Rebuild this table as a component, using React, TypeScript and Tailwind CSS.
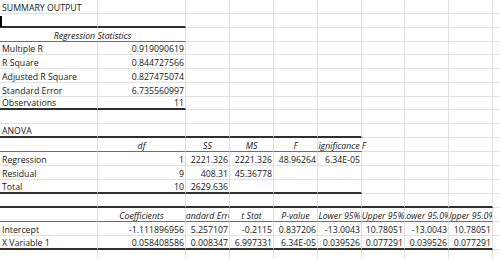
import React from 'react';

type Cell = {
  t?: string;
  a?: 'l' | 'r' | 'c';
  i?: boolean;
  b?: 'thick' | 'thin';
  w?: string;
  spill?: boolean;
  noRight?: boolean;
};

type Row = { h: string; cells: Cell[] };

const widths = [
  'w-[98px]',
  'w-[88px]',
  'w-[44px]',
  'w-[44px]',
  'w-[44px]',
  'w-[44px]',
  'w-[43px]',
  'w-[44px]',
  'w-[44px]',
  'w-[44px]',
];

const thickRow = (n: number): Cell[] => Array.from({ length: n }, () => ({ b: 'thick' as const }));

const rows: Row[] = [
  { h: 'h-[14px]', cells: [{ t: 'SUMMARY OUTPUT' }] },
  { h: 'h-[14px]', cells: thickRow(2) },
  { h: 'h-[14px]', cells: [{ t: 'Regression Statistics', a: 'c', i: true, b: 'thin', w: 'w-[186px]' }] },
  { h: 'h-[13px]', cells: [{ t: 'Multiple R' }, { t: '0.919090619', a: 'r' }] },
  { h: 'h-[14px]', cells: [{ t: 'R Square' }, { t: '0.844727566', a: 'r' }] },
  { h: 'h-[14px]', cells: [{ t: 'Adjusted R Square' }, { t: '0.827475074', a: 'r' }] },
  { h: 'h-[14px]', cells: [{ t: 'Standard Error' }, { t: '6.735560997', a: 'r' }] },
  { h: 'h-[13px]', cells: [{ t: 'Observations', b: 'thick' }, { t: '11', a: 'r', b: 'thick' }] },
  { h: 'h-[14px]', cells: [] },
  { h: 'h-[14px]', cells: [{ t: 'ANOVA', b: 'thick' }, ...thickRow(5)] },
  {
    h: 'h-[14px]',
    cells: [
      { b: 'thin' },
      { t: 'df', a: 'c', i: true, b: 'thin' },
      { t: 'SS', a: 'c', i: true, b: 'thin' },
      { t: 'MS', a: 'c', i: true, b: 'thin' },
      { t: 'F', a: 'c', i: true, b: 'thin' },
      { t: 'Significance F', a: 'c', i: true, b: 'thin', spill: true, noRight: true },
    ],
  },
  {
    h: 'h-[14px]',
    cells: [
      { t: 'Regression' },
      { t: '1', a: 'r' },
      { t: '2221.326', a: 'r' },
      { t: '2221.326', a: 'r' },
      { t: '48.96264', a: 'r' },
      { t: '6.34E-05', a: 'r' },
    ],
  },
  {
    h: 'h-[14px]',
    cells: [{ t: 'Residual' }, { t: '9', a: 'r' }, { t: '408.31', a: 'r' }, { t: '45.36778', a: 'r' }],
  },
  {
    h: 'h-[14px]',
    cells: [
      { t: 'Total', b: 'thick' },
      { t: '10', a: 'r', b: 'thick' },
      { t: '2629.636', a: 'r', b: 'thick' },
      ...thickRow(3),
    ],
  },
  { h: 'h-[14px]', cells: thickRow(9) },
  {
    h: 'h-[14px]',
    cells: [
      { b: 'thin' },
      { t: 'Coefficients', a: 'c', i: true, b: 'thin' },
      { t: 'Standard Error', a: 'c', i: true, b: 'thin' },
      { t: 't Stat', a: 'c', i: true, b: 'thin' },
      { t: 'P-value', a: 'c', i: true, b: 'thin' },
      { t: 'Lower 95%', a: 'c', i: true, b: 'thin' },
      { t: 'Upper 95%', a: 'c', i: true, b: 'thin' },
      { t: 'Lower 95.0%', a: 'c', i: true, b: 'thin' },
      { t: 'Upper 95.0%', a: 'c', i: true, b: 'thin' },
    ],
  },
  {
    h: 'h-[14px]',
    cells: [
      { t: 'Intercept' },
      { t: '-1.111896956', a: 'r' },
      { t: '5.257107', a: 'r' },
      { t: '-0.2115', a: 'r' },
      { t: '0.837206', a: 'r' },
      { t: '-13.0043', a: 'r' },
      { t: '10.78051', a: 'r' },
      { t: '-13.0043', a: 'r' },
      { t: '10.78051', a: 'r' },
    ],
  },
  {
    h: 'h-[14px]',
    cells: [
      { t: 'X Variable 1', b: 'thick' },
      { t: '0.058408586', a: 'r', b: 'thick' },
      { t: '0.008347', a: 'r', b: 'thick' },
      { t: '6.997331', a: 'r', b: 'thick' },
      { t: '6.34E-05', a: 'r', b: 'thick' },
      { t: '0.039526', a: 'r', b: 'thick' },
      { t: '0.077291', a: 'r', b: 'thick' },
      { t: '0.039526', a: 'r', b: 'thick' },
      { t: '0.077291', a: 'r', b: 'thick' },
    ],
  },
  { h: 'h-[14px]', cells: [] },
];

const SheetCell: React.FC<{ cell: Cell; width: string }> = ({ cell, width }) => {
  const border =
    cell.b === 'thick'
      ? 'border-b-2 border-b-[#2f2f2f]'
      : cell.b === 'thin'
        ? 'border-b border-b-[#6e6e6e]'
        : 'border-b border-b-[#e1e1e1]';
  const align =
    cell.a === 'r' ? 'justify-end pr-[1px]' : cell.a === 'c' ? 'justify-center' : 'justify-start pl-[2px]';
  // the header that spills into the empty cell on its right keeps its left edge clipped
  const clip = cell.spill ? '[clip-path:inset(0_-60px_0_0)]' : 'overflow-hidden';
  const right = cell.noRight ? '' : 'border-r border-r-[#e1e1e1]';

  return (
    <div
      className={`${width} shrink-0 h-full flex items-end whitespace-nowrap ${border} ${right} ${align} ${clip} ${
        cell.i ? 'italic' : ''
      }`}
    >
      {cell.t}
    </div>
  );
};

export default function App() {
  return (
    <div className="relative w-[500px] h-[259px] overflow-hidden bg-white text-[#161616] font-['Open_Sans',Arial,sans-serif] text-[8.75px] leading-[10px]">
      {rows.map((row, ri) => {
        const cells: { cell: Cell; width: string }[] = [];
        let col = 0;
        row.cells.forEach((c) => {
          cells.push({ cell: c, width: c.w ?? widths[col] });
          col += c.w ? 2 : 1;
        });
        while (col < widths.length) {
          cells.push({ cell: {}, width: widths[col] });
          col++;
        }
        return (
          <div key={ri} className={`flex ${row.h}`}>
            {cells.map((c, ci) => (
              <SheetCell key={ci} cell={c.cell} width={c.width} />
            ))}
          </div>
        );
      })}
      <div className="absolute left-0 top-[16px] w-[2px] h-[11px] bg-black" />
    </div>
  );
}
